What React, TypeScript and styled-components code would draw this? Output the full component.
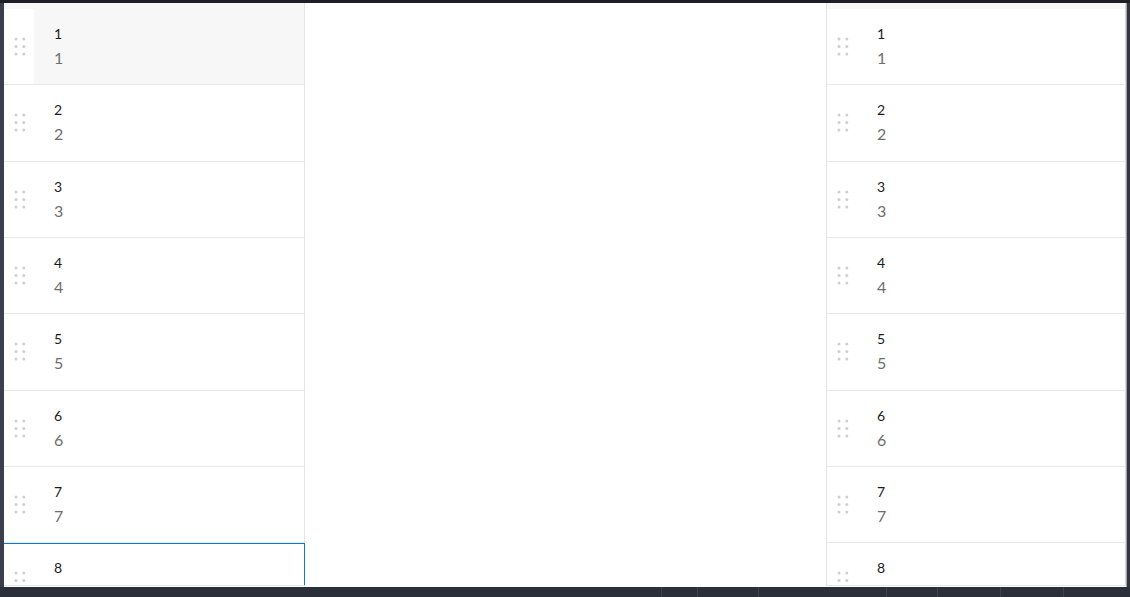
import React from "react";
import styled, { createGlobalStyle } from "styled-components";

const Global = createGlobalStyle`
  html, body { margin: 0; padding: 0; background: #ffffff; }
  body { font-family: Lato, "Open Sans", sans-serif; overflow: hidden; }
`;

const Frame = styled.div`
  width: 1130px;
  height: 597px;
  display: grid;
  grid-template-rows: 3px 584px 10px;
  background: #ffffff;
`;

const TopBar = styled.div`
  background: #1e1f26;
`;

const Middle = styled.div`
  display: flex;
  min-height: 0;
`;

const LeftStrip = styled.div`
  width: 4px;
  flex-shrink: 0;
  background: #3b3f4c;
`;

const RightStrip = styled.div`
  width: 4px;
  flex-shrink: 0;
  background: linear-gradient(to right, #a3a3a3 0 1px, #34363f 1px 100%);
`;

const Workspace = styled.div`
  flex: 1;
  display: flex;
  background: #ffffff;
  min-width: 0;
`;

const Spacer = styled.div`
  flex: 1;
`;

const List = styled.div<{ $side: "left" | "right" }>`
  width: ${(p) => (p.$side === "left" ? 301 : 300)}px;
  flex-shrink: 0;
  box-sizing: border-box;
  height: 583px;
  border-bottom: 1px solid #e6e6e6;
  border-left: ${(p) => (p.$side === "right" ? "1px solid #e4e4e4" : "none")};
  overflow: hidden;
  display: flex;
  flex-direction: column;
`;

const TopBand = styled.div<{ $edge: string }>`
  height: 6px;
  flex-shrink: 0;
  background: #f7f7f7;
  border-right: 1px solid ${(p) => p.$edge};
`;

const Row = styled.div<{ $focused?: boolean; $edge: string }>`
  position: relative;
  flex-shrink: 0;
  height: 76.33px;
  box-sizing: border-box;
  display: flex;
  background: #ffffff;
  border-bottom: 1px solid #e8e8e8;
  border-right: 1px solid ${(p) => p.$edge};
  &::after {
    content: "";
    display: ${(p) => (p.$focused ? "block" : "none")};
    position: absolute;
    top: 0;
    left: 0;
    right: -1px;
    bottom: -1px;
    border-top: 1px solid #0a7bd0;
    border-right: 1px solid #0a7bd0;
    pointer-events: none;
  }
`;

const Handle = styled.div`
  width: 30px;
  flex-shrink: 0;
  display: flex;
  align-items: center;
  justify-content: center;
  padding-left: 1px;
  box-sizing: border-box;
`;

const Content = styled.div<{ $hover?: boolean }>`
  flex: 1;
  display: flex;
  flex-direction: column;
  justify-content: center;
  gap: 3px;
  padding-left: 20px;
  background: ${(p) => (p.$hover ? "#f7f7f7" : "transparent")};
`;

const Title = styled.div`
  font-size: 14px;
  line-height: 20px;
  color: #1b1b1b;
`;

const Subtitle = styled.div`
  font-size: 16px;
  line-height: 22px;
  color: #6e6e6e;
`;

const BottomBar = styled.div`
  background: #2b2f3a;
  display: flex;
`;

const BarCell = styled.div<{ $w?: number }>`
  ${(p) => (p.$w ? `width: ${p.$w}px; flex-shrink: 0;` : "flex: 1;")}
  box-sizing: border-box;
  & + & {
    border-left: 1px solid #3d4250;
  }
`;

const Dots = () => (
  <svg width="12" height="19" viewBox="0 0 12 19" aria-hidden="true">
    {[2, 9.5, 17].map((y) =>
      [2, 9.8].map((x) => <circle key={`${x}-${y}`} cx={x} cy={y} r={1.5} fill="#cfcfcf" />)
    )}
  </svg>
);

const items = [1, 2, 3, 4, 5, 6, 7, 8];

const ItemList: React.FC<{ side: "left" | "right" }> = ({ side }) => {
  const edge = side === "left" ? "#e4e4e4" : "#d8d8d8";
  return (
    <List $side={side}>
      <TopBand $edge={edge} />
      {items.map((n) => (
        <Row key={n} $edge={edge} $focused={side === "left" && n === 8}>
          <Handle>
            <Dots />
          </Handle>
          <Content $hover={side === "left" && n === 1}>
            <Title>{n}</Title>
            <Subtitle>{n}</Subtitle>
          </Content>
        </Row>
      ))}
    </List>
  );
};

const barWidths = [0, 36, 61, 128, 51, 63, 63, 67];

export default function App() {
  return (
    <>
      <Global />
      <Frame>
        <TopBar />
        <Middle>
          <LeftStrip />
          <Workspace>
            <ItemList side="left" />
            <Spacer />
            <ItemList side="right" />
          </Workspace>
          <RightStrip />
        </Middle>
        <BottomBar>
          {barWidths.map((w, i) => (
            <BarCell key={i} $w={w || undefined} />
          ))}
        </BottomBar>
      </Frame>
    </>
  );
}
